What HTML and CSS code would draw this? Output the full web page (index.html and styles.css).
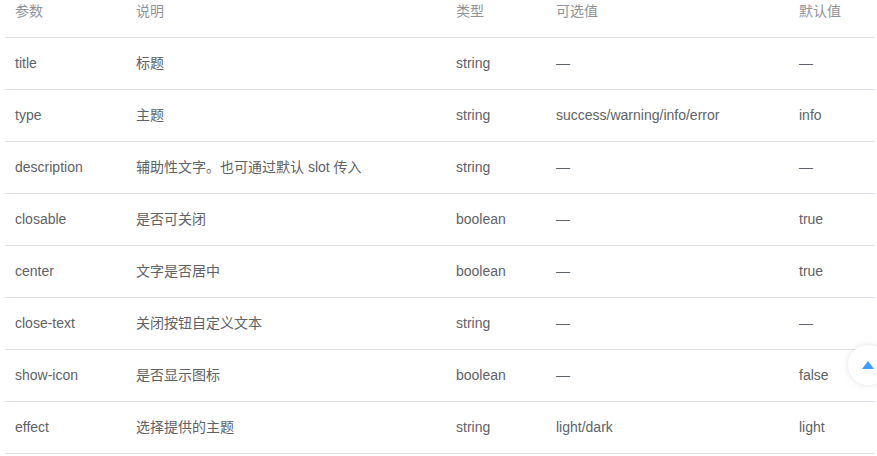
FILE: index.html
```html
<!DOCTYPE html>
<html lang="zh">
<head>
<meta charset="utf-8">
<link rel="stylesheet" href="styles.css">
</head>
<body>
<div class="page">
  <table class="attr-table">
    <colgroup>
      <col class="c1"><col class="c2"><col class="c3"><col class="c4"><col class="c5">
    </colgroup>
    <thead>
      <tr><th>参数</th><th>说明</th><th>类型</th><th>可选值</th><th>默认值</th></tr>
    </thead>
    <tbody>
      <tr><td>title</td><td>标题</td><td>string</td><td>—</td><td>—</td></tr>
      <tr><td>type</td><td>主题</td><td>string</td><td>success/warning/info/error</td><td>info</td></tr>
      <tr><td>description</td><td>辅助性文字。也可通过默认 slot 传入</td><td>string</td><td>—</td><td>—</td></tr>
      <tr><td>closable</td><td>是否可关闭</td><td>boolean</td><td>—</td><td>true</td></tr>
      <tr><td>center</td><td>文字是否居中</td><td>boolean</td><td>—</td><td>true</td></tr>
      <tr><td>close-text</td><td>关闭按钮自定义文本</td><td>string</td><td>—</td><td>—</td></tr>
      <tr><td>show-icon</td><td>是否显示图标</td><td>boolean</td><td>—</td><td>false</td></tr>
      <tr><td>effect</td><td>选择提供的主题</td><td>string</td><td>light/dark</td><td>light</td></tr>
    </tbody>
  </table>
  <div class="backtop">
    <svg width="14" height="10" viewBox="0 0 14 10"><polygon points="7,1 13,9 1,9" fill="#409eff"/></svg>
  </div>
</div>
</body>
</html>
```
FILE: styles.css
```css
html, body {
  margin: 0;
  padding: 0;
  background: #fff;
  overflow: hidden;
}
body {
  font-family: "Liberation Sans", Arial, "Noto Sans CJK SC", sans-serif;
  font-size: 14px;
}
.page {
  padding-left: 5px;
  width: 870px;
}
.attr-table {
  width: 870px;
  border-collapse: collapse;
  table-layout: fixed;
  margin-top: -14px;
}
.c1 { width: 121px; }
.c2 { width: 320px; }
.c3 { width: 100px; }
.c4 { width: 243px; }
.c5 { width: 86px; }
.attr-table th,
.attr-table td {
  text-align: left;
  padding: 15px 10px;
  line-height: 21px;
  border-bottom: 1px solid #dcdfe6;
  white-space: nowrap;
}
.attr-table th {
  font-weight: normal;
  color: #909399;
}
.attr-table td {
  color: #606266;
}
.backtop {
  position: fixed;
  left: 848px;
  top: 345px;
  width: 40px;
  height: 40px;
  border-radius: 50%;
  background: #fff;
  box-shadow: 0 0 6px rgba(0, 0, 0, 0.12);
  display: flex;
  align-items: center;
  justify-content: center;
}
```
